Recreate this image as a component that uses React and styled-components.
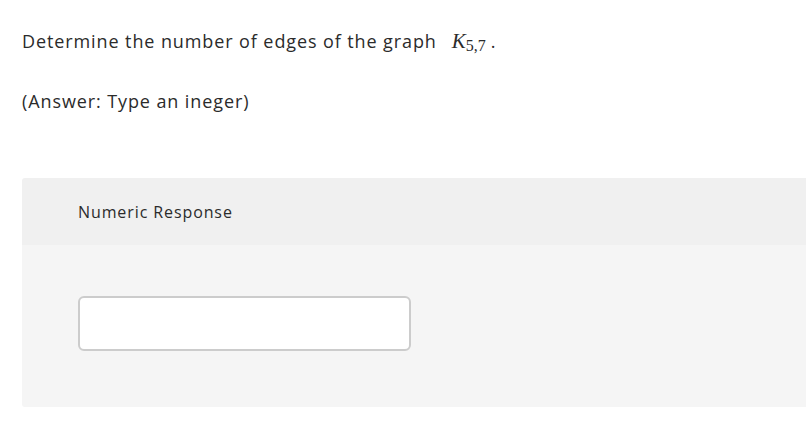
import styled, { createGlobalStyle } from 'styled-components'

const Global = createGlobalStyle`
    body {
        margin:0;
        background:#fff;
        font-family: "Open Sans", Lato, sans-serif;
        color:#2b2b2b;
        letter-spacing:0.9px;
    }
`

const App = () => {
  return (
    <Wrap>
        <Global />
        <Question>
            Determine the number of edges of the graph
            <Math>K<Sub>5,7</Sub></Math>
            <Dot>.</Dot>
        </Question>
        <Hint>(Answer: Type an ineger)</Hint>
        <Panel>
            <PanelHead>Numeric Response</PanelHead>
            <PanelBody>
                <AnswerInput type="text" />
            </PanelBody>
        </Panel>
    </Wrap>
  )
}

export default App;


const Wrap = styled.div `
    padding:27px 0 0 22px;
`

const Question = styled.p `
    margin:0;
    font-size:18px;
    line-height:28px;
    display:flex;
    align-items:baseline;
`

const Math = styled.span `
    font-family:"Liberation Serif", serif;
    font-style:italic;
    font-size:21px;
    letter-spacing:0;
    margin-left:15px;
`

const Sub = styled.sub `
    font-style:normal;
    font-size:16px;
    vertical-align:-3px;
`

const Dot = styled.span `
    margin-left:5px;
`

const Hint = styled.p `
    margin:27px 0 0;
    font-size:18px;
    line-height:28px;
`

const Panel = styled.div `
    margin-top:63px;
    border-radius:3px 0 0 3px;
    overflow:hidden;
`

const PanelHead = styled.div `
    height:67px;
    background:#f0f0f0;
    padding-left:56px;
    display:flex;
    align-items:center;
    font-size:16px;
`

const PanelBody = styled.div `
    height:162px;
    background:#f5f5f5;
    padding:51px 0 0 56px;
    box-sizing:border-box;
`

const AnswerInput = styled.input `
    width:333px; height:55px;
    box-sizing:border-box;
    border:2px solid #cccccc;
    border-radius:6px;
    background:#fff;
    outline:none;
`
